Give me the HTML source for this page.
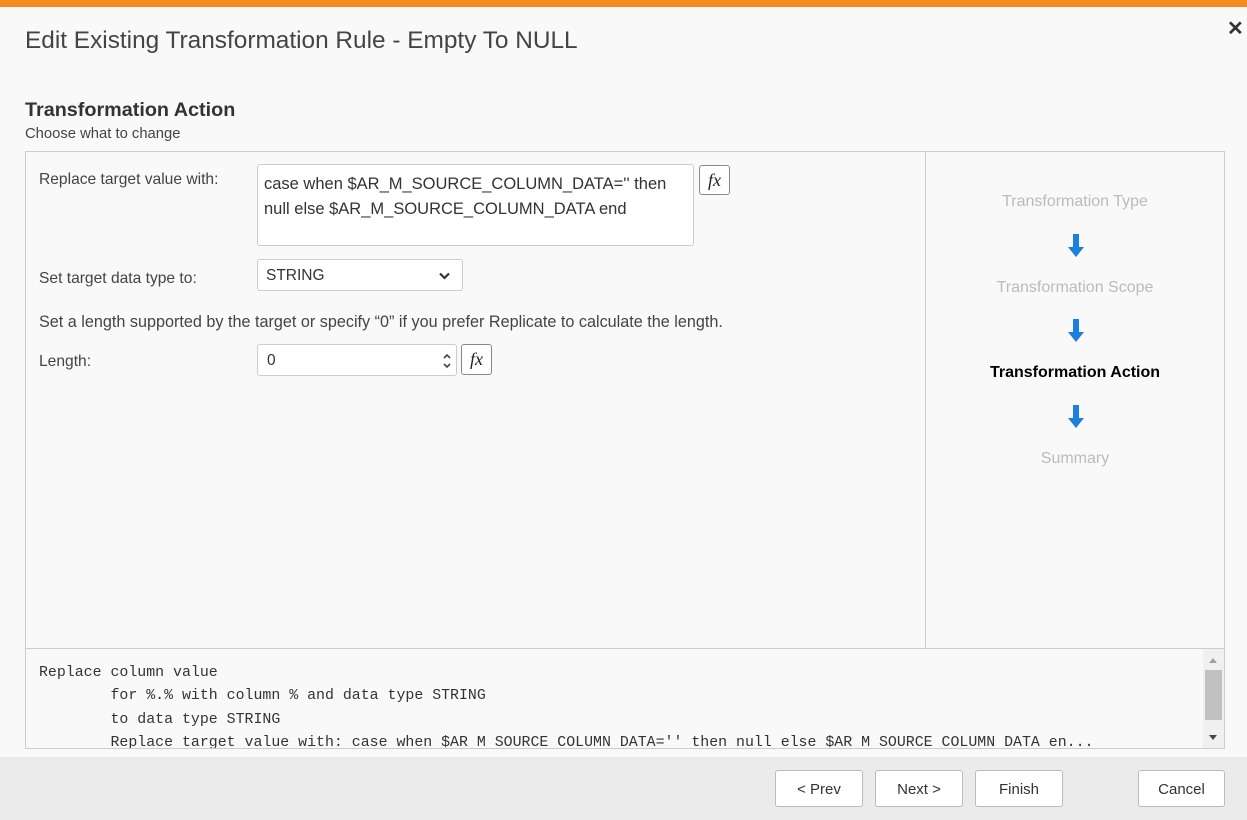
<!DOCTYPE html>
<html><head><style>
*{box-sizing:border-box;margin:0;padding:0}
body{width:1247px;height:820px;background:#f9f9f9;font-family:"Liberation Sans",sans-serif;color:#333;position:relative;overflow:hidden}
.a{position:absolute}
.lbl{font-size:15.6px;color:#444}
.inp{background:#fff;border:1px solid #ccc;border-radius:3px}
.fx{background:#fff;border:1px solid #888;border-radius:3px;font-family:"Liberation Serif",serif;font-style:italic;font-size:18px;text-align:center;color:#222}
.btn{background:#fff;border:1px solid #bbb;border-radius:3px;font-size:15px;color:#333;text-align:center;line-height:38px}
.step{width:300px;left:925px;text-align:center;font-size:16px;color:#bbb}
.arr{left:1066px}
pre{font-family:"Liberation Mono",monospace;font-size:14.9px;line-height:23.3px;color:#333;tab-size:8}
</style></head><body>
<div class="a" style="left:0;top:0;width:1247px;height:7px;background:#f68b22"></div>
<div class="a" style="left:25px;top:27px;font-size:24.4px;color:#444">Edit Existing Transformation Rule - Empty To NULL</div>
<div class="a" style="left:1227px;top:16px;font-size:20px;font-weight:bold;color:#333">✕</div>
<div class="a" style="left:25px;top:99px;font-size:19.8px;font-weight:bold;color:#333">Transformation Action</div>
<div class="a" style="left:25px;top:126px;font-size:14.8px;color:#444">Choose what to change</div>
<div class="a" style="left:25px;top:151px;width:1200px;height:598px;border:1px solid #ccc"></div>
<div class="a" style="left:925px;top:151px;width:1px;height:497px;background:#ccc"></div>
<div class="a" style="left:25px;top:648px;width:1200px;height:1px;background:#ccc"></div>
<div class="a lbl" style="left:39px;top:171px">Replace target value with:</div>
<div class="a inp" style="left:257px;top:164px;width:437px;height:82px;padding:7px 6px;font-size:16.5px;line-height:25px;color:#333">case when $AR_M_SOURCE_COLUMN_DATA='' then<br>null else $AR_M_SOURCE_COLUMN_DATA end</div>
<div class="a fx" style="left:699px;top:165px;width:31px;height:30px;line-height:28px">fx</div>
<div class="a lbl" style="left:39px;top:270px">Set target data type to:</div>
<div class="a inp" style="left:257px;top:259px;width:206px;height:32px;padding:0 8px;font-size:15.5px;line-height:32px">STRING<svg class="a" style="right:12px;top:12px" width="11" height="8" viewBox="0 0 11 8"><path d="M1 1.5l4.5 4.5 4.5-4.5" fill="none" stroke="#333" stroke-width="2.2"/></svg></div>
<div class="a lbl" style="left:39px;top:313px;font-size:16.2px">Set a length supported by the target or specify “0” if you prefer Replicate to calculate the length.</div>
<div class="a lbl" style="left:39px;top:353px">Length:</div>
<div class="a inp" style="left:257px;top:344px;width:200px;height:32px;padding:0 9px;font-size:15.5px;line-height:32px">0<svg class="a" style="right:4px;top:6px" width="10" height="20" viewBox="0 0 10 20"><path d="M2 7l3-3 3 3M2 13l3 3 3-3" fill="none" stroke="#444" stroke-width="1.6"/></svg></div>
<div class="a fx" style="left:461px;top:344px;width:31px;height:31px;line-height:29px">fx</div>
<div class="a step" style="top:193px">Transformation Type</div>
<div class="a step" style="top:279px">Transformation Scope</div>
<div class="a step" style="top:364px;color:#000;font-weight:bold">Transformation Action</div>
<div class="a step" style="top:450px">Summary</div>
<svg class="a arr" style="top:233px" width="20" height="26" viewBox="0 0 20 26"><path d="M7 1h6v13h5l-8 10-8-10h5z" fill="#1a7fdd"/></svg>
<svg class="a arr" style="top:318px" width="20" height="26" viewBox="0 0 20 26"><path d="M7 1h6v13h5l-8 10-8-10h5z" fill="#1a7fdd"/></svg>
<svg class="a arr" style="top:404px" width="20" height="26" viewBox="0 0 20 26"><path d="M7 1h6v13h5l-8 10-8-10h5z" fill="#1a7fdd"/></svg>
<div class="a" style="left:26px;top:649px;width:1177px;height:99px;overflow:hidden;padding:13px 13px">
<pre>Replace column value
	for %.% with column % and data type STRING
	to data type STRING
	Replace target value with: case when $AR M SOURCE COLUMN DATA='' then null else $AR M SOURCE COLUMN DATA en...</pre></div>
<div class="a" style="left:1203px;top:649px;width:21px;height:99px;background:#f0f0f0"></div>
<div class="a" style="left:1205px;top:670px;width:17px;height:50px;background:#c1c1c1"></div>
<svg class="a" style="left:1208px;top:656px" width="10" height="8"><path d="M1 7l4-5 4 5z" fill="#a0a0a0"/></svg>
<svg class="a" style="left:1208px;top:734px" width="10" height="8"><path d="M1 1l4 5 4-5z" fill="#444"/></svg>
<div class="a" style="left:0;top:757px;width:1247px;height:63px;background:#ebebeb"></div>
<div class="a btn" style="left:775px;top:770px;width:88px;height:37px">&lt; Prev</div>
<div class="a btn" style="left:875px;top:770px;width:88px;height:37px">Next &gt;</div>
<div class="a btn" style="left:975px;top:770px;width:88px;height:37px">Finish</div>
<div class="a btn" style="left:1138px;top:770px;width:87px;height:37px">Cancel</div>
</body></html>
